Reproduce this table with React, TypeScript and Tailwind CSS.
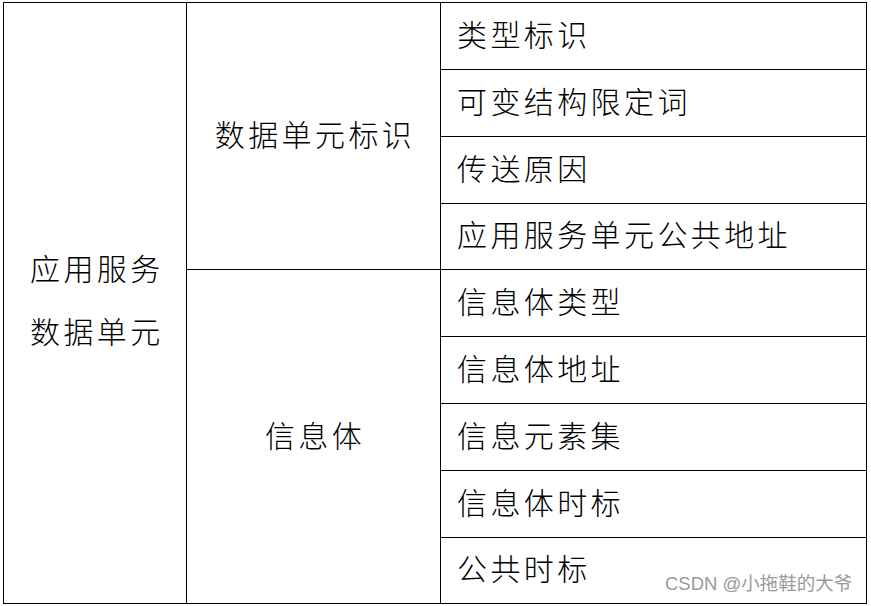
import React from "react";

const rightItems = [
  "类型标识",
  "可变结构限定词",
  "传送原因",
  "应用服务单元公共地址",
  "信息体类型",
  "信息体地址",
  "信息元素集",
  "信息体时标",
  "公共时标",
];

const font = {
  fontFamily: '"Noto Sans CJK SC", "Noto Sans", sans-serif',
};

export default function App() {
  return (
    <div className="w-[871px] h-[606px] bg-white relative overflow-hidden" style={font}>
      <div className="absolute left-[3px] top-[2px] w-[864px] border-l border-t border-black grid grid-cols-[183px_254px_426px] grid-rows-[67px_67px_67px_66px_67px_67px_67px_67px_66px] text-black font-light text-[30px]">
        <div className="row-start-1 row-end-10 col-start-1 border-r border-b border-black flex flex-col justify-center pl-[26px] pb-[8px] leading-[63px] tracking-[3.4px]">
          <div>应用服务</div>
          <div>数据单元</div>
        </div>
        <div className="row-start-1 row-end-5 col-start-2 border-r border-b border-black flex items-center justify-center pb-[5px] tracking-[3.4px]">
          <span className="pl-[3px]">数据单元标识</span>
        </div>
        <div className="row-start-5 row-end-10 col-start-2 border-r border-b border-black flex items-center justify-center pb-[4px] tracking-[3.4px]">
          <span className="pl-[3px]">信息体</span>
        </div>
        {rightItems.map((t, i) => (
          <div
            key={i}
            className="col-start-3 border-r border-b border-black flex items-center pl-[16px] pb-[6px] tracking-[3.4px]"
            style={{ gridRowStart: i + 1 }}
          >
            {t}
          </div>
        ))}
      </div>
      <div className="absolute left-[665px] top-[572px] text-[18.5px] leading-[24px] text-[#9a9a9a]" style={{ fontFamily: '"Liberation Sans", "Noto Sans CJK SC", sans-serif' }}>
        CSDN @小拖鞋的大爷
      </div>
    </div>
  );
}
